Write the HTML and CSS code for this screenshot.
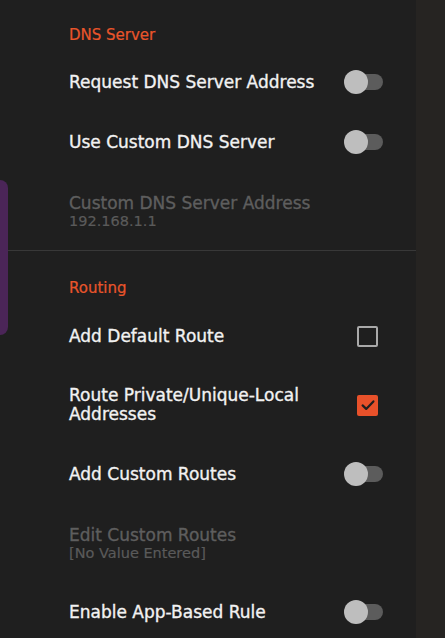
FILE: index.html
```html
<!DOCTYPE html>
<html lang="en">
<head>
<meta charset="utf-8">
<title>VPN Settings</title>
<link rel="stylesheet" href="styles.css">
</head>
<body>
<div class="screen">
  <main class="prefs">
    <div class="category first">DNS Server</div>
    <div class="row">
      <div class="text"><div class="title">Request DNS Server Address</div></div>
      <div class="widget"><span class="switch"><span class="track"></span><span class="thumb"></span></span></div>
    </div>
    <div class="row">
      <div class="text"><div class="title">Use Custom DNS Server</div></div>
      <div class="widget"><span class="switch"><span class="track"></span><span class="thumb"></span></span></div>
    </div>
    <div class="row tall disabled">
      <div class="text">
        <div class="title">Custom DNS Server Address</div>
        <div class="summary">192.168.1.1</div>
      </div>
    </div>
    <div class="divider"></div>
    <div class="category">Routing</div>
    <div class="row">
      <div class="text"><div class="title">Add Default Route</div></div>
      <div class="widget"><span class="checkbox"></span></div>
    </div>
    <div class="row tall">
      <div class="text"><div class="title">Route Private/Unique-Local Addresses</div></div>
      <div class="widget"><span class="checkbox checked"><svg viewBox="0 0 20 20" width="20" height="20"><path d="M4.6 10.4 L8.2 13.9 L15.4 6.4" fill="none" stroke="#1f1f1f" stroke-width="2.2" stroke-linecap="round" stroke-linejoin="round"/></svg></span></div>
    </div>
    <div class="row">
      <div class="text"><div class="title">Add Custom Routes</div></div>
      <div class="widget"><span class="switch"><span class="track"></span><span class="thumb"></span></span></div>
    </div>
    <div class="row tall disabled">
      <div class="text">
        <div class="title">Edit Custom Routes</div>
        <div class="summary">[No Value Entered]</div>
      </div>
    </div>
    <div class="row">
      <div class="text"><div class="title">Enable App-Based Rule</div></div>
      <div class="widget"><span class="switch"><span class="track"></span><span class="thumb"></span></span></div>
    </div>
  </main>
  <aside class="edge"></aside>
  <div class="handle"></div>
</div>
</body>
</html>
```
FILE: styles.css
```css
html, body {
  margin: 0;
  padding: 0;
  background: #1f1f1f;
}
body {
  font-family: "DejaVu Sans", "Liberation Sans", sans-serif;
  color: #f2f2f2;
  overflow: hidden;
}
.screen {
  position: relative;
  display: flex;
  width: 445px;
  height: 638px;
  overflow: hidden;
}
.prefs {
  width: 416px;
  flex: none;
  background: #1f1f1f;
}
.edge {
  flex: 1;
  background: #262422;
}
.handle {
  position: absolute;
  left: 0;
  top: 180px;
  width: 8px;
  height: 155px;
  background: #4b2558;
  border-radius: 0 8px 8px 0;
}
.category {
  padding: 28px 0 9px 69px;
  font-size: 15px;
  line-height: 18px;
  color: #e9552b;
  -webkit-text-stroke: 0.2px currentColor;
}
.category.first {
  padding-top: 26px;
  padding-bottom: 8px;
}
.row {
  display: flex;
  align-items: center;
  height: 60px;
  padding: 0 32px 0 69px;
  box-sizing: border-box;
}
.row.tall {
  height: 78px;
}
.text {
  flex: 1;
  min-width: 0;
  padding-right: 8px;
}
.title {
  font-size: 17px;
  line-height: 19px;
  color: #f2f2f2;
  -webkit-text-stroke: 0.35px currentColor;
}
.summary {
  font-size: 14.5px;
  line-height: 16px;
  color: #5a5a5a;
  -webkit-text-stroke: 0.2px currentColor;
}
.disabled .title {
  color: #5e5e5e;
}
.widget {
  width: 40px;
  flex: none;
  display: flex;
  align-items: center;
  justify-content: flex-end;
}
.switch {
  position: relative;
  display: block;
  width: 40px;
  height: 24px;
}
.track {
  position: absolute;
  right: 1px;
  top: 4px;
  width: 36px;
  height: 16px;
  border-radius: 8px;
  background: #5c5c5c;
}
.thumb {
  position: absolute;
  left: 0;
  top: 0;
  width: 24px;
  height: 24px;
  border-radius: 50%;
  background: #bebebe;
}
.checkbox {
  display: block;
  width: 21px;
  height: 21px;
  box-sizing: border-box;
  border: 2px solid #a9a9a9;
  border-radius: 2px;
  margin-right: 6px;
}
.checkbox.checked {
  border: none;
  background: #e8512a;
  display: flex;
  align-items: center;
  justify-content: center;
}
.checkbox svg {
  display: block;
}
.divider {
  height: 1px;
  background: #383838;
}
```
